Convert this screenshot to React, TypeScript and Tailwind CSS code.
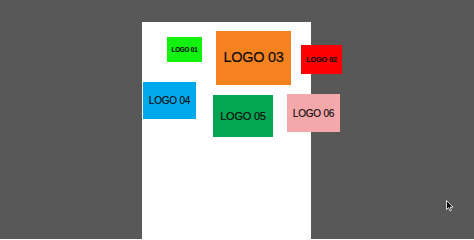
import React from "react";

type Logo = { label: string; cls: string; text: string };

const logos: Logo[] = [
  { label: "LOGO 01", cls: "left-[25px] top-[15px] w-[35px] h-[25px] bg-[#11f20f]", text: "text-[6.3px] font-bold tracking-[-0.03em]" },
  { label: "LOGO 03", cls: "left-[74px] top-[9px] w-[75px] h-[54px] bg-[#f5821f]", text: "text-[14.5px] tracking-[-0.02em]" },
  { label: "LOGO 02", cls: "left-[159px] top-[23px] w-[41px] h-[29px] bg-[#fe0000]", text: "text-[7.4px] font-bold tracking-[-0.03em]" },
  { label: "LOGO 04", cls: "left-[1px] top-[60px] w-[53px] h-[37px] bg-[#00a9ec]", text: "text-[10px] tracking-[-0.02em]" },
  { label: "LOGO 05", cls: "left-[71px] top-[73px] w-[60px] h-[42px] bg-[#03a652]", text: "text-[11px] tracking-[-0.02em]" },
  { label: "LOGO 06", cls: "left-[145px] top-[72px] w-[53px] h-[38px] bg-[#f5a8aa]", text: "text-[10px] tracking-[-0.02em]" },
];

export default function App() {
  return (
    <div
      className="relative w-[474px] h-[239px] overflow-hidden bg-[#585858] flex justify-start"
      style={{ fontFamily: '"Liberation Sans", Arial, sans-serif' }}
    >
      <div className="relative ml-[142px] mt-[22px] w-[169px] h-[217px] bg-white">
        {logos.map((l) => (
          <div
            key={l.label}
            className={`absolute flex items-center justify-center text-[#0a0a0a] ${l.cls}`}
          >
            <span className={l.text} style={{ WebkitTextStroke: "0.15px #0a0a0a" }}>{l.label}</span>
          </div>
        ))}
      </div>
      <svg
        className="absolute left-[446px] top-[200px]"
        width="8"
        height="12"
        viewBox="0 0 8 12"
      >
        <path d="M0.5 0.5 L0.5 9.5 L2.6 7.6 L4 11 L5.4 10.4 L4.1 7.2 L7 7.2 Z" fill="#000" stroke="#fff" strokeWidth="0.8" />
      </svg>
    </div>
  );
}
